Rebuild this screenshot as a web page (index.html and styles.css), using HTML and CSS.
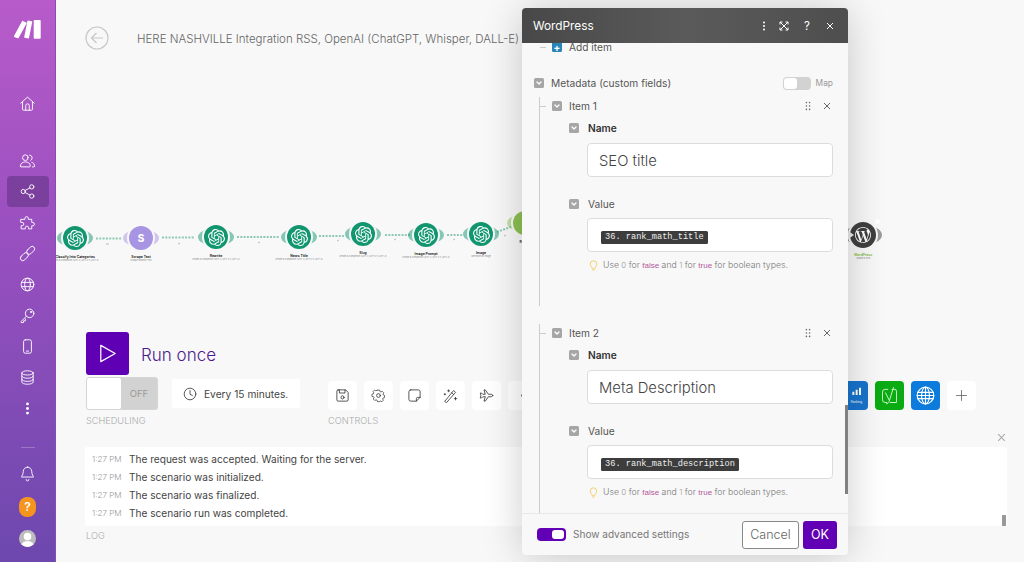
FILE: index.html
```html
<!DOCTYPE html>
<html lang="en">
<head>
<meta charset="utf-8">
<title>WordPress scenario</title>
<link rel="stylesheet" href="styles.css">
</head>
<body>
<svg class="defs" aria-hidden="true">
  <symbol id="openai" viewBox="0 0 24 24"><path fill="currentColor" d="M22.2819 9.8211a5.9847 5.9847 0 0 0-.5157-4.9108 6.0462 6.0462 0 0 0-6.5098-2.9A6.0651 6.0651 0 0 0 4.9807 4.1818a5.9847 5.9847 0 0 0-3.9977 2.9 6.0462 6.0462 0 0 0 .7427 7.0966 5.98 5.98 0 0 0 .511 4.9107 6.051 6.051 0 0 0 6.5146 2.9001A5.9847 5.9847 0 0 0 13.2599 24a6.0557 6.0557 0 0 0 5.7718-4.2058 5.9894 5.9894 0 0 0 3.9977-2.9001 6.0557 6.0557 0 0 0-.7475-7.0729zm-9.022 12.6081a4.4755 4.4755 0 0 1-2.8764-1.0408l.1419-.0804 4.7783-2.7582a.7948.7948 0 0 0 .3927-.6813v-6.7369l2.02 1.1686a.071.071 0 0 1 .038.052v5.5826a4.504 4.504 0 0 1-4.4945 4.4944zm-9.6607-4.1254a4.4708 4.4708 0 0 1-.5346-3.0137l.142.0852 4.783 2.7582a.7712.7712 0 0 0 .7806 0l5.8428-3.3685v2.3324a.0804.0804 0 0 1-.0332.0615L9.74 19.9502a4.4992 4.4992 0 0 1-6.1408-1.6464zM2.3408 7.8956a4.485 4.485 0 0 1 2.3655-1.9728V11.6a.7664.7664 0 0 0 .3879.6765l5.8144 3.3543-2.0201 1.1685a.0757.0757 0 0 1-.071 0l-4.8303-2.7865A4.504 4.504 0 0 1 2.3408 7.872zm16.5963 3.8558L13.1038 8.364 15.1192 7.2a.0757.0757 0 0 1 .071 0l4.8303 2.7913a4.4944 4.4944 0 0 1-.6765 8.1042v-5.6772a.79.79 0 0 0-.407-.667zm2.0107-3.0231l-.142-.0852-4.7735-2.7818a.7759.7759 0 0 0-.7854 0L9.409 9.2297V6.8974a.0662.0662 0 0 1 .0284-.0615l4.8303-2.7866a4.4992 4.4992 0 0 1 6.6802 4.66zM8.3065 12.863l-2.02-1.1638a.0804.0804 0 0 1-.038-.0567V6.0742a4.4992 4.4992 0 0 1 7.3757-3.4537l-.142.0805L8.704 5.459a.7948.7948 0 0 0-.3927.6813zm1.0976-2.3654l2.602-1.4998 2.6069 1.4998v2.9994l-2.5974 1.4997-2.6067-1.4997Z"/></symbol>
  <symbol id="wp" viewBox="0 0 24 24"><path fill="currentColor" d="M21.469 6.825c.84 1.537 1.318 3.3 1.318 5.175 0 3.979-2.156 7.456-5.363 9.325l3.295-9.527c.615-1.54.82-2.771.82-3.864 0-.405-.026-.78-.07-1.11m-7.981.105c.647-.03 1.232-.105 1.232-.105.582-.075.514-.93-.067-.899 0 0-1.755.135-2.88.135-1.064 0-2.85-.15-2.85-.15-.585-.03-.661.855-.075.885 0 0 .54.061 1.125.09l1.68 4.605-2.37 7.08L5.354 6.9c.649-.03 1.234-.1 1.234-.1.585-.075.516-.93-.065-.896 0 0-1.746.138-2.874.138-.2 0-.438-.008-.69-.015C4.911 3.15 8.235 1.215 12 1.215c2.809 0 5.365 1.072 7.286 2.833-.046-.003-.091-.009-.141-.009-1.06 0-1.812.923-1.812 1.914 0 .89.513 1.643 1.06 2.531.411.72.89 1.643.89 2.977 0 .915-.354 1.994-.821 3.479l-1.075 3.585-3.9-11.61.001.014zM12 22.784c-1.059 0-2.081-.153-3.048-.437l3.237-9.406 3.315 9.087c.024.053.05.101.078.149-1.12.393-2.325.609-3.582.609M1.211 12c0-1.564.336-3.05.935-4.39L7.29 21.709C3.694 19.96 1.212 16.271 1.211 12M12 0C5.385 0 0 5.385 0 12s5.385 12 12 12 12-5.385 12-12S18.615 0 12 0"/></symbol>
  <symbol id="chev" viewBox="0 0 10 10"><rect width="10" height="10" rx="1.6" fill="#a6a6a6"/><path d="M3 4l2 2 2-2" fill="none" stroke="#fff" stroke-width="1.3" stroke-linecap="round" stroke-linejoin="round"/></symbol>
  <symbol id="x" viewBox="0 0 10 10"><path d="M2 2l6 6M8 2l-6 6" fill="none" stroke="currentColor" stroke-width="1"/></symbol>
  <symbol id="grip" viewBox="0 0 10 10"><g fill="currentColor"><circle cx="3.4" cy="1.6" r=".8"/><circle cx="6.6" cy="1.6" r=".8"/><circle cx="3.4" cy="5" r=".8"/><circle cx="6.6" cy="5" r=".8"/><circle cx="3.4" cy="8.4" r=".8"/><circle cx="6.6" cy="8.4" r=".8"/></g></symbol>
  <symbol id="bulb" viewBox="0 0 10 12"><path d="M5 .8a3.6 3.6 0 0 0-3.6 3.6c0 1.9 1.8 3 2.2 5.2h2.8c.4-2.2 2.2-3.3 2.2-5.2A3.6 3.6 0 0 0 5 .8zM3.8 11h2.400" fill="none" stroke="#f2cf6d" stroke-width="1.100"/></symbol>
</svg>

<aside class="sidebar">
  <svg class="logo" viewBox="0 0 27 19"><path fill="#fff" d="M0 16 8 1.2c.2-.4.5-.5.9-.3l3.3 1.7c.4.2.5.5.3.9L4.6 18c-.2.4-.5.5-.9.3L.3 16.9c-.4-.2-.5-.5-.3-.9zM10.200 17 13.400 1c.1-.4.3-.6.7-.5l3.600.7c.4.1.6.3.5.7l-3.200 16c-.1.4-.3.6-.7.5l-3.600-.7c-.4-.1-.6-.3-.5-.7zM20.500 0h5.400c.5 0 .8.3.8.8v17.200c0 .5-.3.8-.8.8h-5.400c-.5 0-.8-.3-.8-.8V.8c0-.5.3-.8.8-.8z"/></svg>
  <nav class="nav nav-home">
    <a class="nav-item"><svg viewBox="0 0 24 24"><path d="M2.500 11.500 12 3l9.500 8.500M5 9.500V20a1.500 1.500 0 0 0 1.500 1.500h11A1.500 1.500 0 0 0 19 20V9.500M9.500 21.500V15a2.500 2.500 0 0 1 5 0v6.500"/></svg></a>
  </nav>
  <nav class="nav nav-main">
    <a class="nav-item"><svg viewBox="0 0 24 24"><circle cx="9" cy="8" r="4"/><path d="M2 20c0-4 3-6 7-6s7 2 7 6c0 .6-.4 1-1 1H3c-.6 0-1-.4-1-1zM15 4.300a4 4 0 0 1 1.500 7.500M18 14.500c2.500.7 4 2.700 4 5.500 0 .6-.4 1-1 1h-2"/></svg></a>
    <a class="nav-item active"><svg viewBox="0 0 24 24"><circle cx="18" cy="5.500" r="3"/><circle cx="6" cy="12" r="3"/><circle cx="18" cy="18.500" r="3"/><path d="M8.700 10.500l6.600-3.500M8.700 13.500l6.600 3.500"/></svg></a>
    <a class="nav-item"><svg viewBox="0 0 24 24"><path d="M3 7.500h5.500V6a2.300 2.300 0 0 1 4.600 0v1.500H18V12h1.500a2.300 2.300 0 0 1 0 4.600H18V21h-4.500v-1.500a2.300 2.300 0 0 0-4.600 0V21H3v-4.500h1.500a2.300 2.300 0 0 0 0-4.600H3z"/></svg></a>
    <a class="nav-item"><svg viewBox="0 0 24 24"><rect x="-6.500" y="-3.500" width="13" height="7" rx="3.500" transform="translate(7.500 16.500) rotate(-45)"/><rect x="-6.500" y="-3.500" width="13" height="7" rx="3.500" transform="translate(16.500 7.500) rotate(-45)"/></svg></a>
    <a class="nav-item"><svg viewBox="0 0 24 24"><circle cx="12" cy="12" r="9"/><ellipse cx="12" cy="12" rx="4" ry="9"/><path d="M3.500 9h17M3.500 15h17"/></svg></a>
    <a class="nav-item"><svg viewBox="0 0 24 24"><circle cx="15" cy="9" r="6"/><path d="M10.500 13 3 20.500V22h3.500v-2.500H9V17"/><circle cx="17" cy="7" r="1"/></svg></a>
    <a class="nav-item"><svg viewBox="0 0 24 24"><rect x="6.500" y="2.500" width="11" height="19" rx="2.500"/><path d="M10.500 18.500h3"/></svg></a>
    <a class="nav-item"><svg viewBox="0 0 24 24"><ellipse cx="12" cy="5.500" rx="8" ry="3"/><path d="M4 5.500v13c0 1.700 3.600 3 8 3s8-1.300 8-3v-13M4 10c0 1.700 3.600 3 8 3s8-1.300 8-3M4 14.500c0 1.700 3.600 3 8 3s8-1.300 8-3"/></svg></a>
    <a class="nav-item"><svg viewBox="0 0 24 24"><circle class="solid" cx="12" cy="5.500" r="2"/><circle class="solid" cx="12" cy="12" r="2"/><circle class="solid" cx="12" cy="18.500" r="2"/></svg></a>
  </nav>
  <div class="nav-sep"></div>
  <nav class="nav">
    <a class="nav-item"><svg viewBox="0 0 24 24"><path d="M12 3a6 6 0 0 0-6 6c0 5-2.500 7-2.500 8h17c0-1-2.500-3-2.500-8a6 6 0 0 0-6-6zM10 20.500a2 2 0 0 0 4 0"/></svg></a>
    <a class="nav-item help-item"><span class="help">?</span></a>
    <a class="nav-item avatar-item"><span class="avatar"><svg viewBox="0 0 18 18"><circle class="solid" cx="9" cy="7" r="4"/><path class="solid" d="M2 18c0-4 3-6 7-6s7 2 7 6z"/></svg></span></a>
  </nav>
</aside>

<main class="main">
  <header class="top">
    <svg class="back" viewBox="0 0 24 24"><circle cx="12" cy="12" r="11"/><path d="M18 12H6.500M11.500 7l-5 5 5 5"/></svg>
    <h1 class="title">HERE NASHVILLE Integration RSS, OpenAI (ChatGPT, Whisper, DALL-E)</h1>
  </header>

  <section class="canvas">
    <svg class="links" viewBox="56 50 968 282">
      <path class="link" d="M96 238.500H121M162 237.500H195M237 237H279M319 236H344M385 235H410M447 235H463M497 232L513 226"/>
      <path class="tick" d="M106 244h3M178 244l2-1M258 243l2-1M337 241l2-1M394 240l2-1M453 240l2-1M504 236l2-1"/>
    </svg>
    <div class="node n1"><span class="disc ai"><svg><use href="#openai"/></svg></span><b>Classify Into Categories</b><small>Create a Completion (GPT-3, GPT-3.5, GPT-4)</small></div>
    <div class="node n2"><span class="disc scrape">S</span><b>Scrape Text</b><small>Scrape Website Text</small></div>
    <div class="node n3"><span class="disc ai"><svg><use href="#openai"/></svg></span><b>Rewrite</b><small>Create a Completion (GPT-3, GPT-3.5, GPT-4)</small></div>
    <div class="node n4"><span class="disc ai"><svg><use href="#openai"/></svg></span><b>News Title</b><small>Create a Completion (GPT-3, GPT-3.5, GPT-4)</small></div>
    <div class="node n5"><span class="disc ai"><svg><use href="#openai"/></svg></span><b>Slug</b><small>Create a Completion (GPT-3, GPT-3.5, GPT-4)</small></div>
    <div class="node n6"><span class="disc ai"><svg><use href="#openai"/></svg></span><b>Image Prompt</b><small>Create a Completion (GPT-3, GPT-3.5, GPT-4)</small></div>
    <div class="node n7"><span class="disc ai"><svg><use href="#openai"/></svg></span><b>Image</b><small>Generate an Image</small></div>
    <div class="node n8"><span class="disc router"></span><b>Router</b></div>
    <div class="node n9"><span class="disc wpress"><svg><use href="#wp"/></svg><i class="notch"></i><i class="badge"></i></span><b class="wp-name">WordPress</b><small>Update a Post</small></div>
  </section>

  <section class="run-row">
    <button class="run-btn"><svg viewBox="0 0 24 24"><path d="M5 3.500v17L20 12z"/></svg></button>
    <span class="run-text">Run once</span>
  </section>

  <section class="control-row">
    <div class="group">
      <div class="group-body">
        <div class="sched"><span class="knob"></span><span class="off">OFF</span></div>
        <div class="every">
          <svg viewBox="0 0 24 24"><circle cx="12" cy="12" r="10"/><path d="M12 6v6.500l4 2"/></svg>
          <span>Every 15 minutes.</span>
        </div>
      </div>
      <div class="caption">SCHEDULING</div>
    </div>
    <div class="group controls">
      <div class="group-body tools">
        <button class="tool"><svg viewBox="0 0 24 24"><path d="M5 3h12l4 4v12a2 2 0 0 1-2 2H5a2 2 0 0 1-2-2V5a2 2 0 0 1 2-2zM7 3v5h9V3"/><circle cx="12" cy="15" r="2.500"/></svg></button>
        <button class="tool"><svg viewBox="0 0 24 24"><circle cx="12" cy="12" r="3"/><path d="M10 3h4l.6 2.600 1.900.8 2.300-1.400 2.800 2.800-1.400 2.300.8 1.900 2 .6v4l-2.600.6-.8 1.900 1.400 2.300-2.800 2.800-2.300-1.400-1.900.8L14 24h-4l-.6-2.600-1.900-.8-2.300 1.400-2.800-2.800 1.400-2.300-.8-1.900L0 14.400v-4l2.600-.6.8-1.900L2 5.600 4.800 2.800l2.300 1.400 1.900-.8z" transform="translate(1.500 .8) scale(.875)"/></svg></button>
        <button class="tool"><svg viewBox="0 0 24 24"><path d="M6 3h12a3 3 0 0 1 3 3v9l-6 6H6a3 3 0 0 1-3-3V6a3 3 0 0 1 3-3zM21 15h-4a2 2 0 0 0-2 2v4"/></svg></button>
        <button class="tool"><svg viewBox="0 0 24 24"><path d="M3 21 17 4l3 3L6 23zM14 7.500l3 3M9 3v3M7.500 4.500h3M20 15v4M18 17h4M3 9v2M2 10h2"/></svg></button>
        <button class="tool"><svg viewBox="0 0 24 24"><path d="M22 12c0-1-1-2-3-2h-4L10 3H8l2 7H6L4 8H2l1 4-1 4h2l2-2h4l-2 7h2l5-7h4c2 0 3-1 3-2z"/></svg></button>
        <button class="tool"><svg viewBox="0 0 24 24"><circle class="solid" cx="12" cy="12" r="2"/></svg></button>
      </div>
      <div class="caption">CONTROLS</div>
    </div>
    <div class="tools modules">
      <button class="tool mod mod-rank"><svg viewBox="0 0 24 24"><path class="solid" d="M5 10h3v5H5zM10 7h3v8h-3zM15 4h3v11h-3z"/></svg><small>Ranking</small></button>
      <button class="tool mod mod-yoast"><svg viewBox="0 0 24 24"><path d="M10 5H7a3 3 0 0 0-3 3v9a3 3 0 0 0 3 3h2M15 5h3a2 2 0 0 1 2 2v13h-7"/><path d="M7.500 9l4 8M16.500 3l-5 16c-.4 1.300-1.500 2.500-3 2.500"/></svg></button>
      <button class="tool mod mod-web"><svg viewBox="0 0 24 24"><circle cx="12" cy="12" r="9.500"/><ellipse cx="12" cy="12" rx="4.500" ry="9.500"/><path d="M12 2.500v19M3 8.500h18M3 15.500h18M2.500 12h19"/></svg></button>
      <button class="tool plus"><svg viewBox="0 0 24 24"><path d="M12 4v16M4 12h16"/></svg></button>
    </div>
  </section>

  <div class="log-close"><svg><use href="#x"/></svg></div>
  <section class="log">
    <div class="log-row"><time>1:27 PM</time><span>The request was sent to the server for a reply.</span></div>
    <div class="log-row"><time>1:27 PM</time><span>The request was accepted. Waiting for the server.</span></div>
    <div class="log-row"><time>1:27 PM</time><span>The scenario was initialized.</span></div>
    <div class="log-row"><time>1:27 PM</time><span>The scenario was finalized.</span></div>
    <div class="log-row"><time>1:27 PM</time><span>The scenario run was completed.</span></div>
    <span class="log-thumb"></span>
  </section>
  <div class="caption log-caption">LOG</div>
</main>

<section class="modal">
  <header class="modal-head">
    <span class="modal-title">WordPress</span>
    <div class="modal-actions">
      <svg class="kebab" viewBox="0 0 10 10"><g fill="#fff"><circle cx="5" cy="1.500" r="1"/><circle cx="5" cy="5" r="1"/><circle cx="5" cy="8.500" r="1"/></g></svg>
      <svg viewBox="0 0 10 10"><path d="M1 3.500V1h2.500M6.500 1H9v2.500M9 6.500V9H6.500M3.500 9H1V6.500M1 1l8 8M9 1 1 9" fill="none" stroke="#fff" stroke-width="1"/></svg>
      <span class="q">?</span>
      <svg><use href="#x"/></svg>
    </div>
  </header>
  <div class="modal-body">
    <div class="row add-row"><span class="stub"></span><span class="plus-box">+</span><span class="add-text">Add item</span></div>
    <div class="row meta-row">
      <svg class="chk"><use href="#chev"/></svg><span>Metadata (custom fields)</span>
      <span class="map"><i class="map-toggle"><i class="map-knob"></i></i>Map</span>
    </div>

    <div class="item">
      <div class="row item-row"><span class="stub"></span><svg class="chk"><use href="#chev"/></svg><span>Item 1</span>
        <span class="item-actions"><svg class="grip"><use href="#grip"/></svg><svg class="close"><use href="#x"/></svg></span>
      </div>
      <div class="row field-row strong"><svg class="chk"><use href="#chev"/></svg><span>Name</span></div>
      <div class="input text-input">SEO title</div>
      <div class="row field-row value-row"><svg class="chk"><use href="#chev"/></svg><span>Value</span></div>
      <div class="input pill-input"><code class="pill">36. rank_math_title</code></div>
      <div class="hint"><svg><use href="#bulb"/></svg><span>Use <em>0</em> for <code>false</code> and <em>1</em> for <code>true</code> for boolean types.</span></div>
    </div>

    <div class="item">
      <div class="row item-row"><span class="stub"></span><svg class="chk"><use href="#chev"/></svg><span>Item 2</span>
        <span class="item-actions"><svg class="grip"><use href="#grip"/></svg><svg class="close"><use href="#x"/></svg></span>
      </div>
      <div class="row field-row strong"><svg class="chk"><use href="#chev"/></svg><span>Name</span></div>
      <div class="input text-input">Meta Description</div>
      <div class="row field-row value-row"><svg class="chk"><use href="#chev"/></svg><span>Value</span></div>
      <div class="input pill-input"><code class="pill">36. rank_math_description</code></div>
      <div class="hint"><svg><use href="#bulb"/></svg><span>Use <em>0</em> for <code>false</code> and <em>1</em> for <code>true</code> for boolean types.</span></div>
    </div>
    <span class="modal-thumb"></span>
  </div>
  <footer class="modal-foot">
    <span class="adv-toggle"><i></i></span>
    <span class="adv-text">Show advanced settings</span>
    <button class="btn cancel">Cancel</button>
    <button class="btn ok">OK</button>
  </footer>
</section>
</body>
</html>
```

FILE: styles.css
```css
* { box-sizing: border-box; }
html, body { margin: 0; height: 100%; }
body {
  display: flex;
  width: 1024px;
  height: 562px;
  overflow: hidden;
  background: #f8f8f8;
  font-family: Inter, "Liberation Sans", sans-serif;
  color: #444;
  position: relative;
}
button { font-family: inherit; border: 0; padding: 0; }
.defs { position: absolute; width: 0; height: 0; }

/* sidebar */
.sidebar {
  width: 56px;
  flex: none;
  height: 562px;
  display: flex;
  flex-direction: column;
  align-items: center;
  background: linear-gradient(180deg, #b85bca 0%, #9a50c0 40%, #6d48ae 100%);
  border-right: 1px solid #8a4cb0;
}
.logo { width: 27px; height: 19px; margin-top: 20px; flex: none; }
.nav { display: flex; flex-direction: column; align-items: center; width: 100%; }
.nav-home { margin-top: 49px; }
.nav-main { margin-top: 26px; }
.nav-item {
  width: 42px;
  height: 31px;
  display: flex;
  align-items: center;
  justify-content: center;
  border-radius: 4px;
}
.nav-item svg { width: 17px; height: 17px; fill: none; stroke: #fff; stroke-width: 1.3; stroke-linecap: round; stroke-linejoin: round; }
.nav-item svg .solid { fill: #fff; stroke: none; }
.nav-item.active { background: #7b3f9e; }
.nav-sep { width: 14px; height: 1px; background: rgba(255,255,255,.25); margin: 23px 0 10px; flex: none; }
.help-item { margin-top: 2px; }
.avatar-item { margin-top: 1px; }
.help {
  width: 17px;
  height: 20px;
  border-radius: 8px;
  background: #f7941d;
  color: #fff;
  font-size: 12px;
  font-weight: 600;
  display: flex;
  align-items: center;
  justify-content: center;
}
.avatar {
  width: 17px;
  height: 17px;
  border-radius: 50%;
  background: #bdbdbd;
  overflow: hidden;
  display: block;
}
.avatar svg { width: 17px; height: 17px; display: block; stroke: none; }

/* main */
.main { flex: 1; min-width: 0; display: flex; flex-direction: column; }
.top { height: 50px; padding: 26px 0 0 29px; display: flex; align-items: center; flex: none; }
.back { width: 24px; height: 24px; fill: none; stroke: #c8c8c8; stroke-width: 1.200; flex: none; }
.title {
  margin: 1px 0 0 28px;
  font-size: 11.500px;
  font-weight: 300;
  color: #666;
  white-space: nowrap;
}

/* canvas */
.canvas { position: relative; height: 282px; flex: none; overflow: hidden; }
.links { position: absolute; left: 0; top: 0; width: 968px; height: 282px; }
.link { fill: none; stroke: #8fc9b4; stroke-width: 2; stroke-dasharray: 2 1.300; }
.tick { fill: none; stroke: #bbb; stroke-width: 1; }
.node {
  position: absolute;
  width: 100px;
  display: flex;
  flex-direction: column;
  align-items: center;
  white-space: nowrap;
}
.node b { font-size: 3.400px; line-height: 4px; font-weight: 700; color: #333; margin-top: 5px; }
.node small { font-size: 2.200px; line-height: 4px; color: #888; }
.disc {
  --c: #12966f;
  position: relative;
  width: 24px;
  height: 24px;
  display: flex;
  align-items: center;
  justify-content: center;
  z-index: 1;
}
.disc::before {
  content: "";
  position: absolute;
  left: -6px;
  right: -6px;
  top: 3px;
  bottom: 3px;
  border-radius: 50%;
  z-index: -2;
  background: var(--c);
  opacity: .5;
}
.disc::after {
  content: "";
  position: absolute;
  inset: 0;
  border-radius: 50%;
  background: var(--c);
  box-shadow: 0 0 0 2px #f8f8f8;
  z-index: -1;
}
.ai { --c: #12966f; color: #fff; }
.ai svg { width: 17px; height: 17px; }
.scrape { --c: #a794e2; color: #fff; font-size: 10px; font-weight: 800; }
.router { --c: #8cc152; }
.wpress { --c: #3f3f3f; color: #fff; width: 26px; height: 26px; }
.wpress svg { width: 16px; height: 16px; }
.notch {
  position: absolute;
  left: -3px;
  top: 8px;
  border-left: 7px solid #eaeaea;
  border-top: 5px solid transparent;
  border-bottom: 5px solid transparent;
}
.badge {
  position: absolute;
  right: -4px;
  top: -3px;
  width: 5px;
  height: 5px;
  border-radius: 50%;
  background: #fff;
}
.n1 { left: -31px; top: 176px; }
.n2 { left: 35px; top: 176px; }
.n3 { left: 110px; top: 175px; }
.n4 { left: 193px; top: 175px; }
.n5 { left: 257px; top: 172px; }
.n6 { left: 320px; top: 173px; }
.n7 { left: 375px; top: 172px; }
.n8 { left: 419px; top: 161px; }
.n9 { left: 757px; top: 172px; }
.node .wp-name { color: #8cc152; }

/* run */
.run-row { display: flex; align-items: center; height: 43px; padding-left: 30px; flex: none; }
.run-btn {
  width: 43px;
  height: 43px;
  border-radius: 3px;
  background: #5f00b5;
  display: flex;
  align-items: center;
  justify-content: center;
}
.run-btn svg { width: 23px; height: 23px; fill: none; stroke: #fff; stroke-width: 1.3; stroke-linejoin: round; }
.run-text { font-size: 17px; font-weight: 300; color: #4c1a8c; margin: 2px 0 0 12px; }

/* control row */
.control-row { display: flex; align-items: flex-start; margin-top: 2px; padding: 0 48px 0 30px; flex: none; }
.group { display: flex; flex-direction: column; }
.group-body { height: 33px; display: flex; align-items: flex-end; }
.caption { font-size: 9.200px; line-height: 12px; margin-top: 5px; color: #aaa; font-weight: 300; }
.sched {
  width: 72px;
  height: 33px;
  display: flex;
  background: #d2d2d2;
  border-radius: 3px;
  border: 1px solid #d6d6d6;
}
.knob { width: 34px; background: #fff; border-radius: 2px; }
.off { flex: 1; display: flex; align-items: center; justify-content: center; font-size: 9.500px; color: #999; }
.every {
  width: 128px;
  height: 29px;
  margin: 0 0 2px 14px;
  background: #fff;
  border-radius: 3px;
  display: flex;
  align-items: center;
  padding-left: 11px;
  font-size: 10.200px;
  color: #444;
}
.every svg { width: 14px; height: 14px; fill: none; stroke: #444; stroke-width: 1.500; stroke-linecap: round; margin-right: 7px; }
.controls { margin-left: 28px; }
.tools { display: flex; gap: 7px; }
.tool {
  width: 29px;
  height: 29px;
  background: #fff;
  border-radius: 4px;
  display: flex;
  align-items: center;
  justify-content: center;
  color: #333;
}
.tool svg { width: 15px; height: 15px; fill: none; stroke: #333; stroke-width: 1.300; stroke-linecap: round; stroke-linejoin: round; }
.tool svg .solid { fill: #333; stroke: none; }
.modules { margin-left: auto; padding-top: 4px; }
.mod-rank { background: #1874cd; flex-direction: column; }
.mod-rank svg { width: 16px; height: 16px; margin: -3px 0 0 6px; }
.mod-rank svg .solid { fill: #fff; }
.mod-rank small { font-size: 3px; line-height: 3px; color: #fff; margin-left: 6px; }
.mod-yoast { background: #0aab13; }
.mod-yoast svg { width: 21px; height: 21px; stroke: #cdf5c8; stroke-width: 1.100; }
.mod-web { background: #0d7bdc; }
.mod-web svg { width: 21px; height: 21px; stroke: #fff; stroke-width: 1.300; }
.plus svg { width: 15px; height: 15px; stroke-width: 1.200; stroke: #555; }

/* log */
.log-close { height: 20px; display: flex; justify-content: flex-end; align-items: center; padding-right: 17px; color: #aaa; flex: none; }
.log-close svg { width: 11px; height: 11px; }
.log {
  position: relative;
  height: 79px;
  margin: 0 17px 0 29px;
  background: #fff;
  border-radius: 2px;
  overflow: hidden;
  flex: none;
}
.log-row { height: 18px; display: flex; align-items: center; padding-left: 7px; }
.log-row:first-child { margin-top: -15px; }
.log-row time { width: 37px; font-size: 8.100px; font-weight: 300; color: #999; flex: none; }
.log-row span { font-size: 10.100px; color: #444; }
.log-thumb { position: absolute; right: 1px; bottom: 0; width: 4px; height: 11px; background: #999; }
.log-caption { margin: 4px 0 0 30px; }

/* modal */
.modal {
  position: absolute;
  left: 522px;
  top: 8px;
  width: 326px;
  height: 547px;
  display: flex;
  flex-direction: column;
  background: #f8f8f8;
  border-radius: 4px;
  box-shadow: 0 2px 40px rgba(0,0,0,.2);
  overflow: hidden;
  z-index: 5;
}
.modal-head {
  height: 35px;
  flex: none;
  display: flex;
  align-items: center;
  justify-content: space-between;
  padding: 0 13px 0 11px;
  background: linear-gradient(90deg, #484848, #5a5a5a 50%, #4e4e4e);
  color: #fff;
}
.modal-title { font-size: 11.800px; font-weight: 400; }
.modal-actions { display: flex; align-items: center; gap: 13px; color: #fff; }
.modal-actions svg { width: 10px; height: 10px; display: block; }
.modal-actions .kebab { margin-right: -3px; }
.modal-actions .q { width: 10px; text-align: center; font-size: 11.500px; line-height: 12px; }
.modal-body { position: relative; flex: 1; min-height: 0; overflow: hidden; }
.row { display: flex; align-items: center; height: 18px; font-size: 10.200px; color: #555; }
.chk { width: 10px; height: 10px; flex: none; margin-right: 7px; }
.stub { width: 6px; height: 1px; background: #ccc; margin-right: 6px; flex: none; }
.add-row { margin: -5px 0 0 18px; }
.plus-box {
  width: 10px;
  height: 10px;
  border-radius: 1.500px;
  background: #2b86b8;
  color: #fff;
  font-size: 10px;
  font-weight: 700;
  line-height: 10px;
  text-align: center;
  margin-right: 7px;
  flex: none;
}
.add-text { font-size: 10.200px; }
.meta-row { margin: 18px 15px 0 12px; }
.map { margin-left: auto; display: flex; align-items: center; font-size: 8.400px; color: #999; }
.map-toggle { width: 28px; height: 13px; background: #d2d2d2; border-radius: 4px; margin-right: 5px; display: block; padding: 1px; }
.map-knob { display: block; width: 13px; height: 11px; background: #fff; border-radius: 3px; }
.item { margin: 5px 0 0 17px; border-left: 1px solid #ccc; height: 209px; }
.item + .item { margin-top: 18px; height: 220px; }
.item-row { padding-right: 16px; }
.item-row .chk { margin-right: 7px; }
.item-actions { margin-left: auto; display: flex; align-items: center; gap: 9px; color: #666; }
.grip, .close { width: 10px; height: 10px; display: block; }
.field-row { margin: 4px 0 0 29px; }
.field-row .chk { margin-right: 9px; }
.strong span { font-weight: 600; color: #333; }
.value-row { margin-top: 18px; }
.input {
  margin-left: 47px;
  margin-right: 15px;
  height: 34px;
  background: #fff;
  border: 1px solid #dcdcdc;
  border-radius: 4px;
  display: flex;
  align-items: center;
  padding-left: 11px;
}
.text-input { margin-top: 6px; padding-top: 1px; font-size: 14.800px; font-weight: 300; color: #444; }
.pill-input { margin-top: 5px; padding-left: 13px; padding-top: 5px; }
.pill {
  font-family: "Liberation Mono", monospace;
  font-size: 8.670px;
  line-height: 13px;
  height: 13px;
  padding: 0 4px;
  background: #3d3d3d;
  color: #eee;
  border-radius: 1.500px;
  white-space: nowrap;
}
.hint {
  display: flex;
  align-items: center;
  height: 18px;
  margin: 4px 0 0 49px;
  font-size: 8.700px;
  color: #777;
  font-weight: 300;
}
.hint svg { width: 9px; height: 11px; margin-right: 5px; flex: none; }
.hint em { font-style: normal; font-size: 8px; color: #999; }
.hint code { font-family: "Liberation Sans", sans-serif; font-size: 8px; color: #b4589c; }
.modal-thumb { position: absolute; right: 0; bottom: 19px; width: 3px; height: 89px; background: #808080; }
.modal-foot {
  height: 42px;
  flex: none;
  border-top: 1px solid #e8e8e8;
  display: flex;
  align-items: center;
  padding: 0 11px 0 15px;
}
.adv-toggle { width: 29px; height: 13px; border-radius: 4px; background: #6200b5; display: block; padding: 2px; flex: none; }
.adv-toggle i { display: block; width: 12px; height: 9px; margin-left: auto; background: #fff; border-radius: 3px; }
.adv-text { font-size: 10.050px; color: #777; margin: -1px 0 0 7px; }
.btn { height: 28px; border-radius: 3px; font-size: 12.500px; }
.cancel { width: 57px; margin-left: auto; background: #fff; border: 1px solid #888; color: #666; font-weight: 300; }
.ok { width: 34px; margin-left: 4px; background: #6200b5; color: #fff; }
```
